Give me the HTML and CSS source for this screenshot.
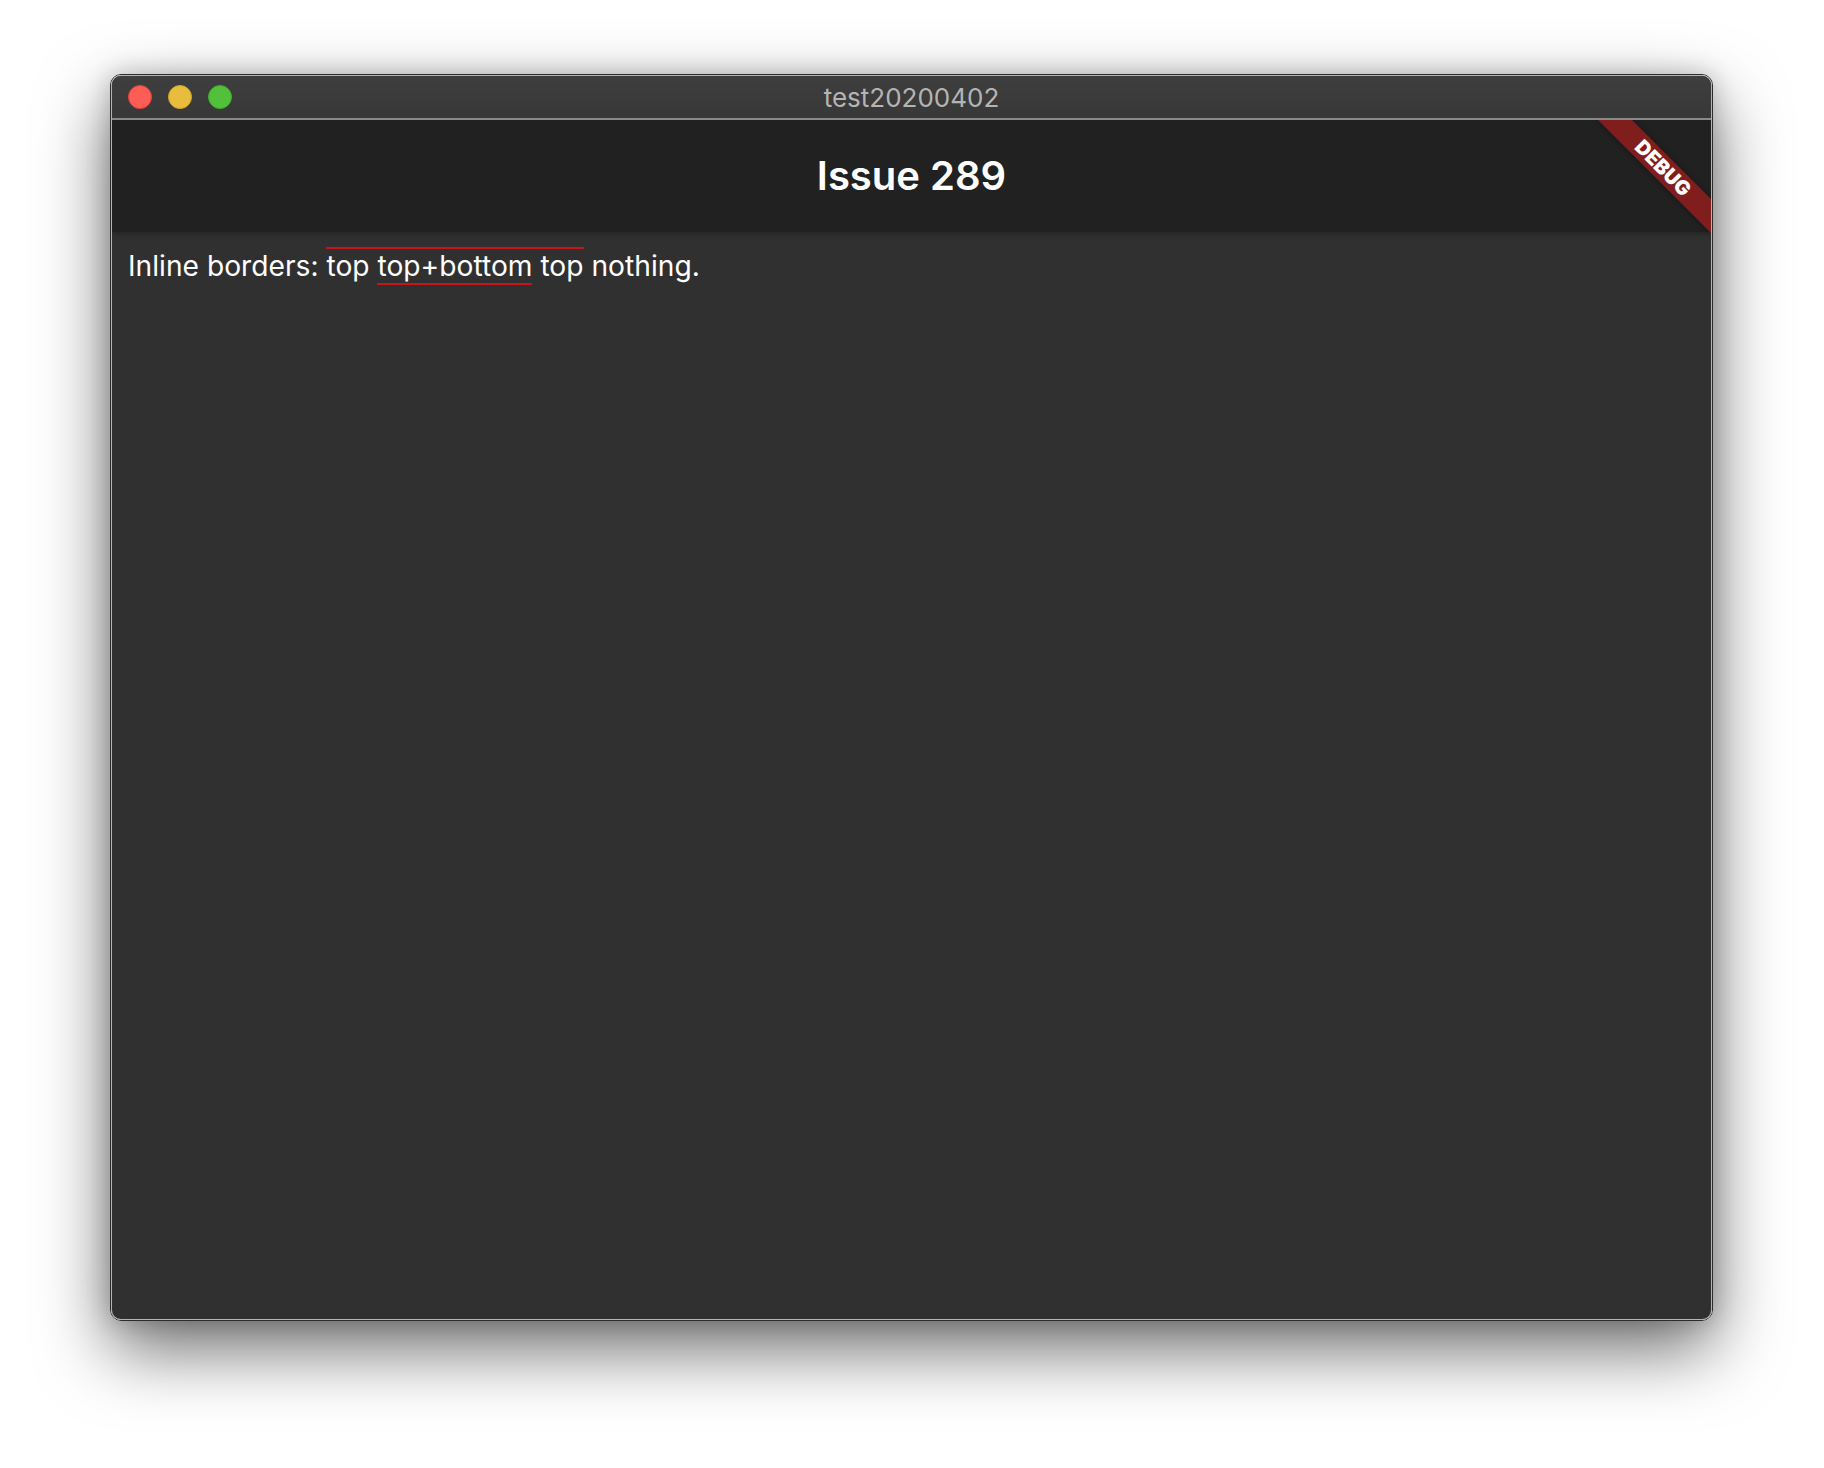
FILE: index.html
```html
<!DOCTYPE html>
<html>
<head>
<meta charset="utf-8">
<title>test20200402</title>
<link rel="stylesheet" href="styles.css">
</head>
<body>
<div class="desktop">
  <div class="window">
    <div class="frame">
      <div class="titlebar">
        <div class="lights">
          <span class="light red"></span>
          <span class="light yellow"></span>
          <span class="light green"></span>
        </div>
        <div class="wtitle">test20200402</div>
        <div class="spacer"></div>
      </div>
      <div class="app">
        <header class="appbar"><h1 class="apptitle">Issue 289</h1></header>
        <main class="content">
          <p class="line">Inline borders: <span class="bt">top <span class="bb">top+bottom</span> top</span> nothing.</p>
        </main>
        <div class="banner">DEBUG</div>
      </div>
    </div>
  </div>
</div>
</body>
</html>
```

FILE: styles.css
```css
html, body {
  margin: 0;
  padding: 0;
  background: #ffffff;
}
body {
  width: 1824px;
  height: 1468px;
  overflow: hidden;
  font-family: Inter, "Noto Sans", "Liberation Sans", sans-serif;
}
.desktop {
  padding: 74px 0 0 110px;
}
.window {
  width: 1603px;
  height: 1247px;
  box-sizing: border-box;
  border: 1px solid #2c2c2c;
  border-radius: 11px;
  box-shadow: 0 28px 70px rgba(0, 0, 0, 0.58), 0 0 24px rgba(0, 0, 0, 0.2);
}
.frame {
  height: 100%;
  box-sizing: border-box;
  border: 1px solid #b4b4b4;
  border-radius: 10px;
  overflow: hidden;
  display: flex;
  flex-direction: column;
  background: #303030;
}
.titlebar {
  height: 42px;
  flex: none;
  border-bottom: 2px solid #8a8a8a;
  background: linear-gradient(#3e3e3e, #383838);
  display: grid;
  grid-template-columns: 1fr auto 1fr;
  align-items: center;
}
.lights {
  display: flex;
  gap: 16px;
  padding-left: 16px;
}
.light {
  width: 24px;
  height: 24px;
  border-radius: 50%;
  box-sizing: border-box;
}
.red { background: #fe5d56; border: 1px solid #e0443e; }
.yellow { background: #e8bd3b; border: 1px solid #d0a52d; }
.green { background: #53c03b; border: 1px solid #40a92c; }
.wtitle {
  font-size: 26px;
  color: #b4b4b4;
  line-height: 1;
  padding-top: 2px;
}
.app {
  flex: 1;
  position: relative;
  overflow: hidden;
}
.appbar {
  height: 112px;
  background: #212121;
  display: flex;
  align-items: center;
  justify-content: center;
  position: relative;
  z-index: 1;
  box-shadow: 0 2px 5px rgba(0, 0, 0, 0.25);
}
.apptitle {
  margin: 0;
  font-size: 40px;
  font-weight: 600;
  color: #ffffff;
  line-height: 1;
}
.content {
  padding: 18px 16px 16px;
}
.line {
  margin: 0;
  font-size: 28.2px;
  line-height: 33px;
  color: #ffffff;
}
.bt {
  border-top: 2px solid #c8151b;
}
.bb {
  border-bottom: 2px solid #c8151b;
}
.banner {
  position: absolute;
  top: 36px;
  right: -32px;
  width: 160px;
  height: 24px;
  transform: rotate(45deg);
  background: rgba(183, 28, 28, 0.63);
  color: #ffffff;
  font-size: 20px;
  font-weight: 900;
  line-height: 24px;
  text-align: center;
  z-index: 2;
  box-shadow: 0 0 6px rgba(0, 0, 0, 0.35);
}
```
